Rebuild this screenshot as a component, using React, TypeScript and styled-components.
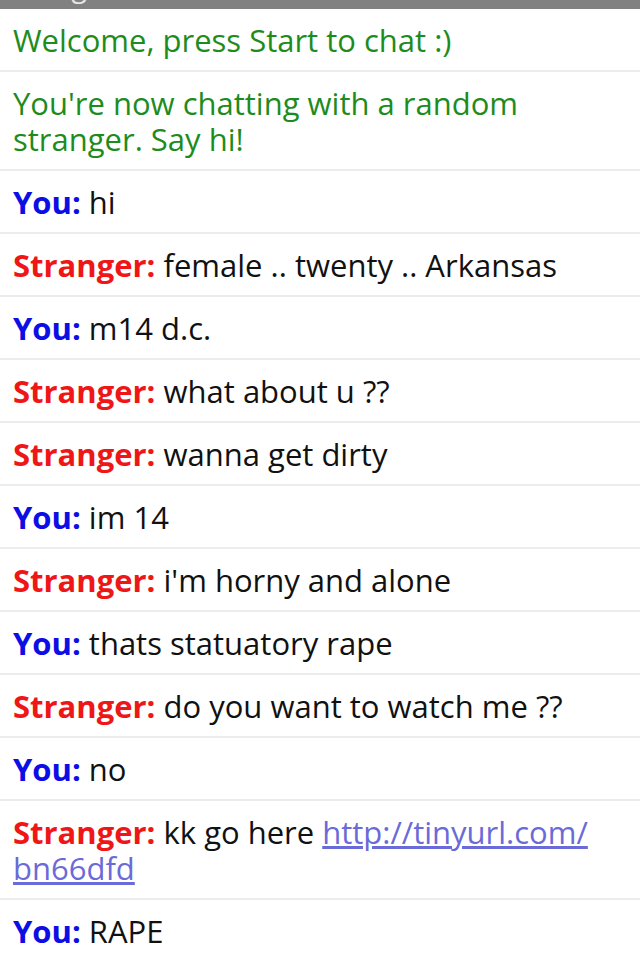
import styled, { createGlobalStyle } from "styled-components"

type Who = "you" | "stranger"

type Line =
  | { kind: "system"; text: string }
  | { kind: "msg"; who: Who; text: string; link?: string[] }

const lines: Line[] = [
  { kind: "system", text: "Welcome, press Start to chat :)" },
  { kind: "system", text: "You're now chatting with a random stranger. Say hi!" },
  { kind: "msg", who: "you", text: "hi" },
  { kind: "msg", who: "stranger", text: "female .. twenty .. Arkansas" },
  { kind: "msg", who: "you", text: "m14 d.c." },
  { kind: "msg", who: "stranger", text: "what about u ??" },
  { kind: "msg", who: "stranger", text: "wanna get dirty" },
  { kind: "msg", who: "you", text: "im 14" },
  { kind: "msg", who: "stranger", text: "i'm horny and alone" },
  { kind: "msg", who: "you", text: "thats statuatory rape" },
  { kind: "msg", who: "stranger", text: "do you want to watch me ??" },
  { kind: "msg", who: "you", text: "no" },
  { kind: "msg", who: "stranger", text: "kk go here ", link: ["http://tinyurl.com/", "bn66dfd"] },
  { kind: "msg", who: "you", text: "RAPE" },
]

const App = () => (
  <>
    <GlobalStyle />
    <Screen>
      <TitleBar>
        <Title>Omegle</Title>
      </TitleBar>
      <Log>
        {lines.map((line, i) => (
          <Row key={i}>
            {line.kind === "system" ? (
              <SystemText>{line.text}</SystemText>
            ) : (
              <>
                <Speaker who={line.who}>{line.who === "you" ? "You:" : "Stranger:"}</Speaker>{" "}
                {line.text}
                {line.link && (
                  <Link href="#">
                    {line.link[0]}
                    <wbr />
                    {line.link[1]}
                  </Link>
                )}
              </>
            )}
          </Row>
        ))}
      </Log>
    </Screen>
  </>
)

export default App


/* styles */
const GlobalStyle = createGlobalStyle`
  html, body {
    margin: 0;
    padding: 0;
    background: #ffffff;
  }
`

const Screen = styled.div`
  width: 640px;
  height: 960px;
  overflow: hidden;
  display: flex;
  flex-direction: column;
  font-family: "Open Sans", "DejaVu Sans", sans-serif;
`

const TitleBar = styled.div`
  height: 9px;
  flex: none;
  background: #818181;
  overflow: hidden;
  position: relative;
`

// window title sits mostly above the visible area; only the descender shows
const Title = styled.span`
  position: absolute;
  left: 8px;
  top: -28px;
  font-size: 28px;
  line-height: 28px;
  color: #e6e6e6;
  white-space: nowrap;
`

const Log = styled.div`
  display: flex;
  flex-direction: column;
`

const Row = styled.div`
  padding: 13px 13px 12px 13px;
  border-bottom: 2px solid #ececec;
  font-size: 31px;
  line-height: 36px;
  color: #111111;
`

const SystemText = styled.span`
  color: #1d8c1d;
`

const Speaker = styled.b<{ who: Who }>`
  font-weight: 700;
  color: ${p => (p.who === "you" ? "#0d0de6" : "#ee1616")};
`

const Link = styled.a`
  color: #6a6ad8;
  text-decoration: underline;
`
